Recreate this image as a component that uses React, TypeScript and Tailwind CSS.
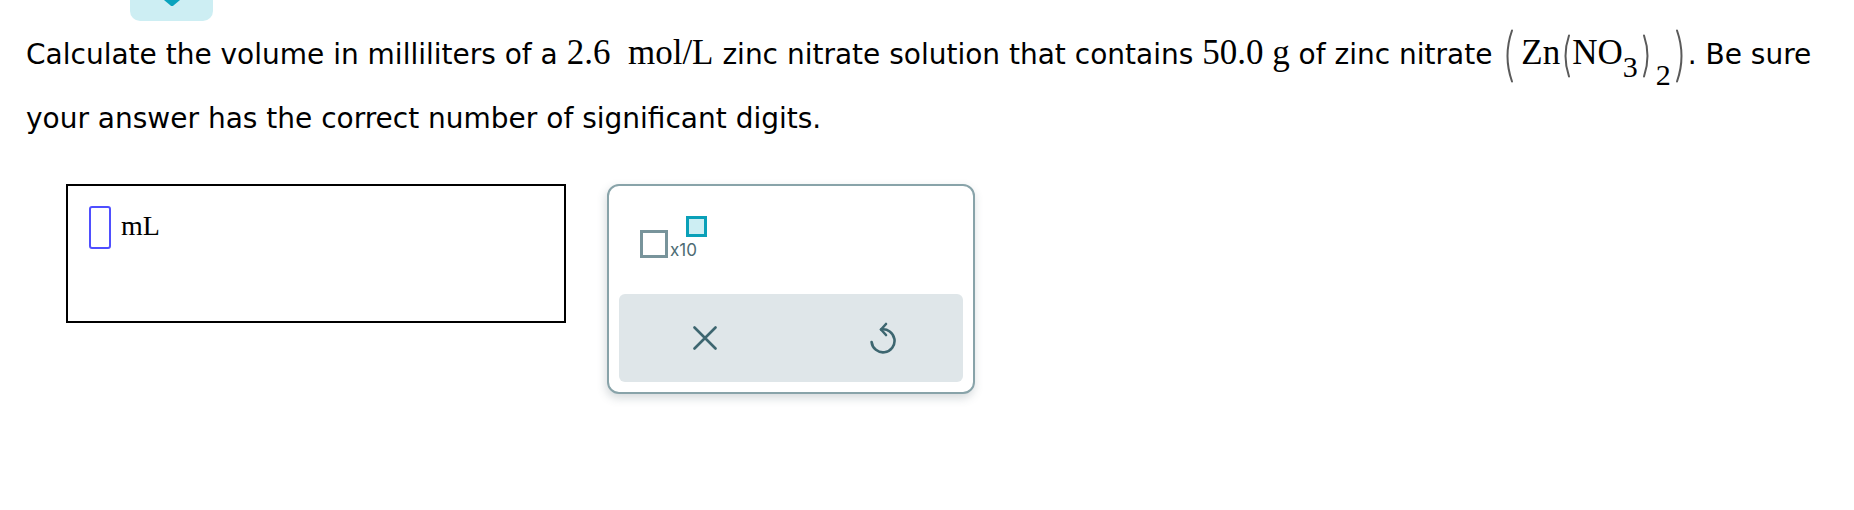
import React from "react";

const sans = { fontFamily: '"DejaVu Sans", Verdana, sans-serif' };

function Paren({ side, h, w, className = "" }: { side: "l" | "r"; h: number; w: number; className?: string }) {
  // stretchy delimiter, like the math renderer draws it
  const a = side === "l" ? w - 3 : 3;
  const b = side === "l" ? 2 : w - 2;
  const d = `M${a} 1.5 Q${b} ${h / 2} ${a} ${h - 1.5}`;
  return (
    <svg width={w} height={h} viewBox={`0 0 ${w} ${h}`} className={`inline-block align-middle ${className}`}>
      <path d={d} fill="none" stroke="#5a5a5a" strokeWidth="2" strokeLinecap="round" />
    </svg>
  );
}

function UndoIcon() {
  return (
    <svg width="28" height="34" viewBox="0 0 28 34" fill="none" stroke="#3d6670" strokeWidth="2.6" strokeLinecap="round" strokeLinejoin="round">
      <path d="M17 4 L12 9.5 L17 15" />
      <path d="M12 9.5 A11.5 11.5 0 1 1 2.6 22" />
    </svg>
  );
}

function XIcon() {
  return (
    <svg width="24" height="24" viewBox="0 0 24 24" fill="none" stroke="#3d6670" strokeWidth="2.6" strokeLinecap="round">
      <path d="M1.5 1.5 L22.5 22.5 M22.5 1.5 L1.5 22.5" />
    </svg>
  );
}

export default function App() {
  return (
    <div className="min-h-screen w-[1854px] bg-white text-black" style={sans}>
      {/* tab peeking from the top */}
      <div className="ml-[130px] flex h-[21px] w-[83px] justify-center rounded-b-[10px] bg-[#cdeef3]">
        <svg width="16" height="6" viewBox="0 0 16 6">
          <path d="M0 0 H16 L9.5 5.5 Q8 6.5 6.5 5.5 Z" fill="#0aa3bd" />
        </svg>
      </div>

      <div className="pl-[26px] text-[28px] leading-[64px]">
        <div className="whitespace-pre">
          Calculate the volume in milliliters of a{" "}
          <span className="font-['Liberation_Serif'] text-[35px]">2.6</span>
          <span className="font-['Liberation_Serif'] text-[35px]">{"  mol/L"}</span> zinc nitrate solution that contains{" "}
          <span className="font-['Liberation_Serif'] text-[35px]">50.0</span>
          <span className="font-['Liberation_Serif'] text-[35px]">{" g"}</span> of zinc nitrate{" "}
          <span className="font-['Liberation_Serif'] text-[35px]">
            <Paren side="l" h={54} w={14} />
            <span className="ml-[6px]">Zn</span>
            <Paren side="l" h={44} w={12} />
            <span>NO</span>
            <span className="relative top-[13px] text-[30px]">3</span>
            <Paren side="r" h={44} w={12} className="ml-[3px]" />
            <span className="relative top-[21px] ml-[3px] text-[30px]">2</span>
            <Paren side="r" h={54} w={14} className="ml-[3px]" />
          </span>
          . Be sure
        </div>
        <div className="whitespace-pre">your answer has the correct number of significant digits.</div>
      </div>

      <div className="mt-[33px] ml-[66px] flex items-start gap-[41px]">
        {/* answer field */}
        <div className="h-[139px] w-[500px] border-2 border-black pl-[21px] pt-[20px]">
          <div className="flex items-start gap-[10px]">
            <div className="h-[43px] w-[22px] rounded-[3px] border-2 border-[#4f4fff]" />
            <span className="mt-[4px] font-['Liberation_Serif'] text-[28px] leading-[32px]">mL</span>
          </div>
        </div>

        {/* keypad */}
        <div className="w-[368px] rounded-[12px] border-2 border-[#88a3a9] bg-white p-[10px] shadow-[-1px_4px_10px_rgba(60,80,90,0.22)]">
          <div className="h-[98px] pl-[21px] pt-[20px]">
            <div className="flex items-start">
              <div className="mt-[14px] h-[28px] w-[28px] border-[3px] border-[#78949b]" />
              <span className="mt-[24px] ml-[2px] text-[17px] leading-[20px] text-[#4d6b73]" style={{ fontFamily: "Inter, sans-serif" }}>
                x10
              </span>
              <div className="ml-[-11px] h-[21px] w-[21px] border-[3px] border-[#0aa0b8] bg-[#cdeef3]" />
            </div>
          </div>
          <div className="grid h-[88px] grid-cols-2 rounded-[6px] bg-[#dfe6e9]">
            <div className="flex items-center justify-center">
              <XIcon />
            </div>
            <div className="flex items-center justify-center pl-[12px] pb-[2px]">
              <UndoIcon />
            </div>
          </div>
        </div>
      </div>
    </div>
  );
}
